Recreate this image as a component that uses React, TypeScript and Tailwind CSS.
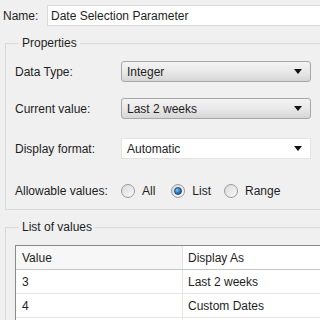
import React from 'react';

function Arrow() {
  return (
    <svg width="8" height="5" viewBox="0 0 8 5" className="shrink-0">
      <path d="M0 0 H8 L4 5 Z" fill="#111" />
    </svg>
  );
}

function Combo({ value, white }: { value: string; white?: boolean }) {
  return (
    <div
      className={`flex items-center justify-between h-[21px] w-[190px] pl-[5px] pr-[8px] ${
        white
          ? 'bg-white border border-[#e3e3e3]'
          : 'rounded-[3px] border border-[#a7a7a7] bg-gradient-to-b from-[#f3f3f3] via-[#e9e9e9] to-[#d6d6d6]'
      }`}
    >
      <span>{value}</span>
      <Arrow />
    </div>
  );
}

function Radio({ label, checked, className = '' }: { label: string; checked?: boolean; className?: string }) {
  return (
    <div className={`flex items-center gap-[7px] ${className}`}>
      <div className="w-[14px] h-[14px] rounded-full border border-[#9a9a9a] bg-gradient-to-br from-[#d9d9d9] to-[#fafafa] flex items-center justify-center">
        {checked && (
          <div className="w-[8px] h-[8px] rounded-full bg-[radial-gradient(circle_at_35%_35%,#7ec3f5,#1c5f9e_70%)] border border-[#184d7e]" />
        )}
      </div>
      <span>{label}</span>
    </div>
  );
}

export default function App() {
  return (
    <div className="w-[320px] h-[320px] overflow-hidden bg-[#f0f0f0] text-[#1e1e1e] text-[12px] font-['Liberation_Sans',Arial,sans-serif] leading-none">
      {/* Name */}
      <div className="flex items-center pt-[5px]">
        <span className="w-[47px] pl-[3px]">Name:</span>
        <div className="flex-1 h-[21px] bg-white border border-[#d9d9d9] border-r-0 flex items-center pl-[3px]">
          Date Selection Parameter
        </div>
      </div>

      {/* Properties */}
      <fieldset className="ml-[5px] mr-[-20px] mt-[11px] border border-[#d8d8d8] h-[173px] px-[9px]">
        <legend className="ml-[4px] px-[3px]">Properties</legend>
        <div className="flex flex-col">
          <div className="flex items-center mt-[12px] h-[21px]">
            <span className="w-[106px]">Data Type:</span>
            <Combo value="Integer" />
          </div>
          <div className="flex items-center mt-[16px] h-[21px]">
            <span className="w-[106px]">Current value:</span>
            <Combo value="Last 2 weeks" />
          </div>
          <div className="flex items-center mt-[19px] h-[21px]">
            <span className="w-[106px]">Display format:</span>
            <Combo value="Automatic" white />
          </div>
          <div className="flex items-center mt-[24px] h-[16px]">
            <span className="w-[106px]">Allowable values:</span>
            <Radio label="All" />
            <Radio label="List" checked className="ml-[16px]" />
            <Radio label="Range" className="ml-[13px]" />
          </div>
        </div>
      </fieldset>

      {/* List of values */}
      <fieldset className="ml-[5px] mr-[-20px] mt-[11px] border border-[#d8d8d8] h-[120px] pl-[9px]">
        <legend className="ml-[4px] px-[3px]">List of values</legend>
        <div className="mt-[12px] bg-white border-t border-l border-[#8a8a8a]">
          <div className="flex h-[24px] items-center border-b border-[#c6c6c6]">
            <div className="w-[167px] h-full flex items-center pl-[6px] bg-[#f7f7f7] border-r border-[#e2e2e2]">Value</div>
            <div className="flex-1 pl-[5px]">Display As</div>
          </div>
          <div className="flex h-[24px] items-center border-b border-[#e6e6e6]">
            <div className="w-[167px] h-full flex items-center pl-[6px] border-r border-[#e6e6e6]">3</div>
            <div className="flex-1 pl-[5px]">Last 2 weeks</div>
          </div>
          <div className="flex h-[24px] items-center border-b border-[#e6e6e6]">
            <div className="w-[167px] h-full flex items-center pl-[6px] border-r border-[#e6e6e6]">4</div>
            <div className="flex-1 pl-[5px]">Custom Dates</div>
          </div>
          <div className="flex h-[24px]">
            <div className="w-[167px] h-full border-r border-[#e6e6e6]" />
          </div>
        </div>
      </fieldset>
    </div>
  );
}
